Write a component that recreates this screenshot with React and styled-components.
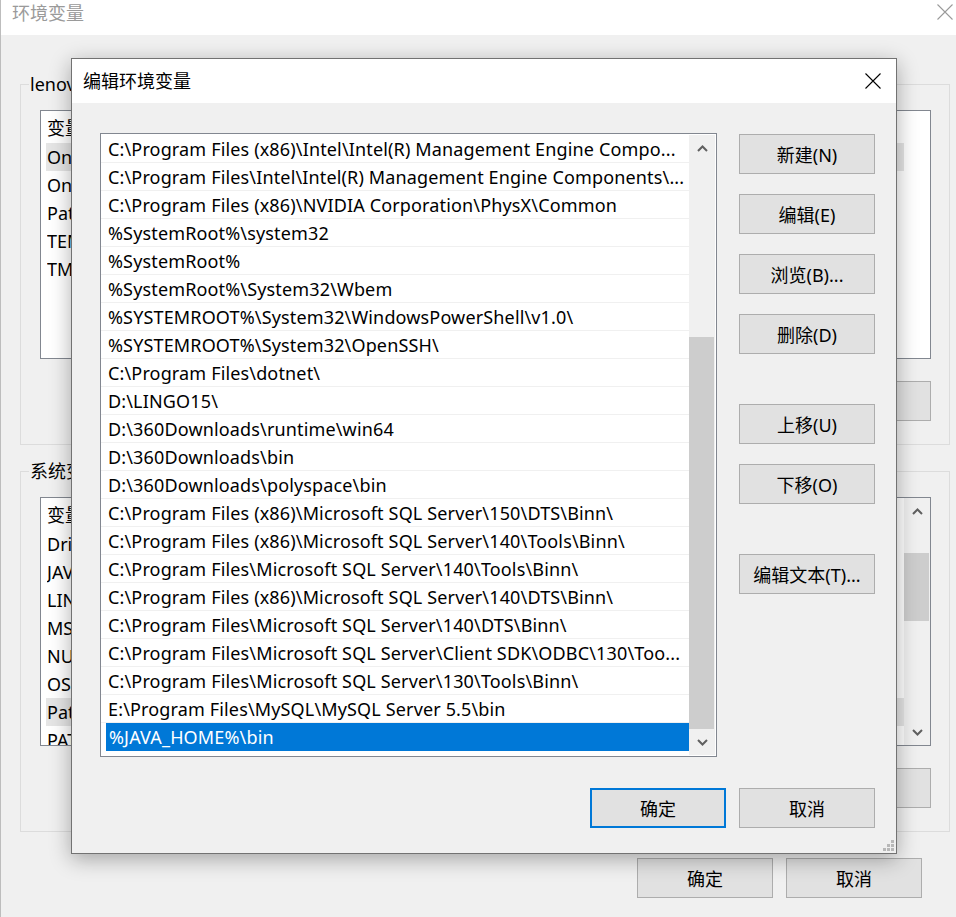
import React from 'react'
import styled, { createGlobalStyle } from 'styled-components'

const GlobalStyle = createGlobalStyle`
  * { box-sizing: border-box; }
  html, body { margin: 0; padding: 0; background: #f0f0f0; }
  body {
    font-family: "Noto Sans", "Noto Sans CJK SC", sans-serif;
    font-size: 17px;
    color: #000;
  }
  #root { width: 956px; height: 917px; overflow: hidden; }
`

const pathRows = [
  'C:\\Program Files (x86)\\Intel\\Intel(R) Management Engine Compo...',
  'C:\\Program Files\\Intel\\Intel(R) Management Engine Components\\...',
  'C:\\Program Files (x86)\\NVIDIA Corporation\\PhysX\\Common',
  '%SystemRoot%\\system32',
  '%SystemRoot%',
  '%SystemRoot%\\System32\\Wbem',
  '%SYSTEMROOT%\\System32\\WindowsPowerShell\\v1.0\\',
  '%SYSTEMROOT%\\System32\\OpenSSH\\',
  'C:\\Program Files\\dotnet\\',
  'D:\\LINGO15\\',
  'D:\\360Downloads\\runtime\\win64',
  'D:\\360Downloads\\bin',
  'D:\\360Downloads\\polyspace\\bin',
  'C:\\Program Files (x86)\\Microsoft SQL Server\\150\\DTS\\Binn\\',
  'C:\\Program Files (x86)\\Microsoft SQL Server\\140\\Tools\\Binn\\',
  'C:\\Program Files\\Microsoft SQL Server\\140\\Tools\\Binn\\',
  'C:\\Program Files (x86)\\Microsoft SQL Server\\140\\DTS\\Binn\\',
  'C:\\Program Files\\Microsoft SQL Server\\140\\DTS\\Binn\\',
  'C:\\Program Files\\Microsoft SQL Server\\Client SDK\\ODBC\\130\\Too...',
  'C:\\Program Files\\Microsoft SQL Server\\130\\Tools\\Binn\\',
  'E:\\Program Files\\MySQL\\MySQL Server 5.5\\bin',
  '%JAVA_HOME%\\bin',
]

const userVars = [
  ['OneDrive', 'C:\\Users\\lenovo\\OneDrive'],
  ['OneDriveConsumer', 'C:\\Users\\lenovo\\OneDrive'],
  ['Path', 'C:\\Users\\lenovo\\AppData\\Local\\Microsoft\\WindowsApps;'],
  ['TEMP', 'C:\\Users\\lenovo\\AppData\\Local\\Temp'],
  ['TMP', 'C:\\Users\\lenovo\\AppData\\Local\\Temp'],
]

const sysVars = [
  ['DriverData', 'C:\\Windows\\System32\\Drivers\\DriverData'],
  ['JAVA_HOME', 'C:\\Program Files\\Java\\jdk1.8.0_201'],
  ['LINGO15_HOME', 'D:\\LINGO15'],
  ['MSMPI_BIN', 'C:\\Program Files\\Microsoft MPI\\Bin\\'],
  ['NUMBER_OF_PROCESSORS', '8'],
  ['OS', 'Windows_NT'],
  ['Path', 'C:\\Program Files (x86)\\Intel\\Intel(R) Management Engine...'],
  ['PATHEXT', '.COM;.EXE;.BAT;.CMD;.VBS;.VBE;.JS;.JSE;.WSF;.WSH;.MSC'],
]

function CloseIcon({ color }) {
  return (
    <svg width="16" height="16" viewBox="0 0 16 16">
      <path d="M0.5 0.5 L15.5 15.5 M15.5 0.5 L0.5 15.5" stroke={color} strokeWidth="1.1" fill="none" />
    </svg>
  )
}

function Chevron({ down }) {
  return (
    <svg width="11" height="7" viewBox="0 0 11 7">
      <path
        d={down ? 'M1 1 L5.5 5.5 L10 1' : 'M1 6 L5.5 1.5 L10 6'}
        stroke="#606060"
        strokeWidth="2"
        fill="none"
      />
    </svg>
  )
}

function ResizeGrip() {
  const dots = [[8, 0], [4, 4], [8, 4], [0, 8], [4, 8], [8, 8]]
  return (
    <Grip width="11" height="11" viewBox="0 0 11 11">
      {dots.map(([x, y]) => (
        <rect key={x + '-' + y} x={x} y={y} width="3" height="3" fill="#b8b8b8" />
      ))}
    </Grip>
  )
}

function Scrollbar({ thumbTop, thumbHeight }) {
  return (
    <ScrollTrack>
      <ScrollArrow><Chevron /></ScrollArrow>
      <ThumbLane>
        <Thumb $top={thumbTop} $h={thumbHeight} />
      </ThumbLane>
      <ScrollArrow><Chevron down /></ScrollArrow>
    </ScrollTrack>
  )
}

function VarGroup({ title, vars, selected, letters, top, scroll }) {
  return (
    <Group $top={top}>
      <GroupLabel>{title}</GroupLabel>
      <VarList>
        <VarRows $inset={!scroll}>
          <VarHeader>
            <NameCell>变量</NameCell>
            <ValueCell>值</ValueCell>
          </VarHeader>
          {vars.map(([name, value]) => (
            <VarRow key={name} $selected={name === selected}>
              <NameCell>{name}</NameCell>
              <ValueCell>{value}</ValueCell>
            </VarRow>
          ))}
        </VarRows>
        {scroll && <Scrollbar thumbTop={29} thumbHeight={68} />}
      </VarList>
      <ButtonRow>
        <Button>新建({letters[0]})...</Button>
        <Button>编辑({letters[1]})...</Button>
        <Button>删除({letters[2]})</Button>
      </ButtonRow>
    </Group>
  )
}

export default function App() {
  return (
    <>
      <GlobalStyle />
      <Window>
        <WindowTitle>
          <TitleText $muted>环境变量</TitleText>
          <CloseIcon color="#9a9a9a" />
        </WindowTitle>
        <WindowBody>
          <VarGroup
            title="lenovo 的用户变量(U)"
            vars={userVars}
            selected="OneDrive"
            letters={['N', 'E', 'D']}
            top={0}
          />
          <VarGroup
            title="系统变量(S)"
            vars={sysVars}
            selected="Path"
            letters={['W', 'I', 'L']}
            top={14}
            scroll
          />
          <ButtonRow $bottom>
            <Button>确定</Button>
            <Button>取消</Button>
          </ButtonRow>
        </WindowBody>

        <Dialog>
          <DialogTitle>
            <TitleText>编辑环境变量</TitleText>
            <CloseIcon color="#000" />
          </DialogTitle>
          <DialogBody>
            <PathList>
              <PathRows>
                {pathRows.map((p, i) => (
                  <PathRow key={p} $selected={i === pathRows.length - 1}>{p}</PathRow>
                ))}
              </PathRows>
              <Scrollbar thumbHeight={392} />
            </PathList>
            <SideButtons>
              <Button>新建(N)</Button>
              <Button $gap={20}>编辑(E)</Button>
              <Button $gap={20}>浏览(B)...</Button>
              <Button $gap={20}>删除(D)</Button>
              <Button $gap={50}>上移(U)</Button>
              <Button $gap={20}>下移(O)</Button>
              <Button $gap={50}>编辑文本(T)...</Button>
            </SideButtons>
            <DialogFooter>
              <Button $focused>确定</Button>
              <Button>取消</Button>
            </DialogFooter>
          </DialogBody>
          <ResizeGrip />
        </Dialog>
      </Window>
    </>
  )
}

const Window = styled.div`
  position: relative;
  width: 956px;
  height: 917px;
  background: #f0f0f0;
  border-left: 1px solid #bdbdbd;
  display: flex;
  flex-direction: column;
  overflow: hidden;
`

const WindowTitle = styled.div`
  height: 35px;
  flex-shrink: 0;
  background: #fff;
  display: flex;
  align-items: flex-start;
  justify-content: space-between;
  padding: 4px 3px 0 11px;
`

const TitleText = styled.span`
  font-size: 18px;
  line-height: 18px;
  color: ${p => (p.$muted ? '#9a9a9a' : '#000')};
`

const WindowBody = styled.div`
  flex: 1;
  padding: 37px 0 0 19px;
  display: flex;
  flex-direction: column;
`

const Group = styled.fieldset`
  width: 930px;
  margin: ${p => p.$top}px 0 0 0;
  padding: 14px 18px 23px 19px;
  border: 1px solid #dcdcdc;
  min-width: 0;
`

const GroupLabel = styled.legend`
  margin-left: -11px;
  padding: 0 1px;
  line-height: 24px;
  font-size: 18px;
`

const VarList = styled.div`
  height: 249px;
  background: #fff;
  border: 1px solid #828790;
  display: flex;
  overflow: hidden;
`

const VarRows = styled.div`
  flex: 1;
  min-width: 0;
  margin-right: ${p => (p.$inset ? 26 : 0)}px;
`

const VarHeader = styled.div`
  height: 32px;
  display: flex;
  align-items: center;
  padding-left: 6px;
`

const VarRow = styled.div`
  height: 28px;
  display: flex;
  align-items: center;
  margin-left: 5px;
  padding-left: 1px;
  background: ${p => (p.$selected ? '#e5e5e5' : 'transparent')};
`

const NameCell = styled.span`
  width: 320px;
  white-space: nowrap;
  overflow: hidden;
  font-size: 18px;
`

const ValueCell = styled.span`
  flex: 1;
  white-space: nowrap;
  overflow: hidden;
  font-size: 18px;
`

const ScrollTrack = styled.div`
  width: 26px;
  flex-shrink: 0;
  background: #f0f0f0;
  display: flex;
  flex-direction: column;
`

const ScrollArrow = styled.div`
  height: 26px;
  flex-shrink: 0;
  display: flex;
  align-items: center;
  justify-content: center;
`

const ThumbLane = styled.div`
  flex: 1;
  display: flex;
  flex-direction: column;
`

const Thumb = styled.div`
  height: ${p => p.$h}px;
  margin-top: ${p => (p.$top == null ? 'auto' : `${p.$top}px`)};
  margin-right: 1px;
  background: #cdcdcd;
`

const ButtonRow = styled.div`
  display: flex;
  justify-content: flex-end;
  gap: 13px;
  margin-top: ${p => (p.$bottom ? 26 : 22)}px;
  margin-right: ${p => (p.$bottom ? 34 : 0)}px;
`

const Button = styled.button`
  width: 136px;
  height: 40px;
  flex-shrink: 0;
  margin: ${p => p.$gap || 0}px 0 0 0;
  padding: 0;
  background: #e1e1e1;
  border: ${p => (p.$focused ? '2px solid #0078d7' : '1px solid #adadad')};
  font-family: inherit;
  font-size: 18px;
  color: #000;
`

const Dialog = styled.div`
  position: absolute;
  left: 70px;
  top: 58px;
  width: 826px;
  height: 796px;
  background: #f0f0f0;
  border: 1px solid #727272;
  box-shadow: 0 5px 20px rgba(0, 0, 0, 0.32);
  display: flex;
  flex-direction: column;
`

const DialogTitle = styled.div`
  height: 44px;
  flex-shrink: 0;
  background: #fff;
  display: flex;
  align-items: center;
  justify-content: space-between;
  padding: 0 15px 0 11px;
`

const DialogBody = styled.div`
  flex: 1;
  display: grid;
  grid-template-columns: 617px 136px;
  grid-template-rows: 624px 40px;
  column-gap: 22px;
  row-gap: 31px;
  padding: 30px 21px 25px 28px;
`

const PathList = styled.div`
  background: #fff;
  border: 1px solid #828790;
  padding: 1px 1px 1px 0;
  display: flex;
  overflow: hidden;
`

const PathRows = styled.div`
  flex: 1;
  min-width: 0;
`

const PathRow = styled.div`
  height: 28px;
  display: flex;
  align-items: center;
  white-space: nowrap;
  overflow: hidden;
  font-size: 18px;
  letter-spacing: 0.15px;
  padding-left: ${p => (p.$selected ? 3 : 7)}px;
  margin-left: ${p => (p.$selected ? 5 : 0)}px;
  border-bottom: 1px solid ${p => (p.$selected ? '#0078d7' : '#f0f0f0')};
  background: ${p => (p.$selected ? '#0078d7' : 'transparent')};
  color: ${p => (p.$selected ? '#fff' : '#000')};
`

const SideButtons = styled.div`
  display: flex;
  flex-direction: column;
  padding-top: 1px;
`

const DialogFooter = styled.div`
  grid-column: 1 / 3;
  display: flex;
  justify-content: flex-end;
  gap: 13px;
`

const Grip = styled.svg`
  position: absolute;
  right: 2px;
  bottom: 2px;
`
